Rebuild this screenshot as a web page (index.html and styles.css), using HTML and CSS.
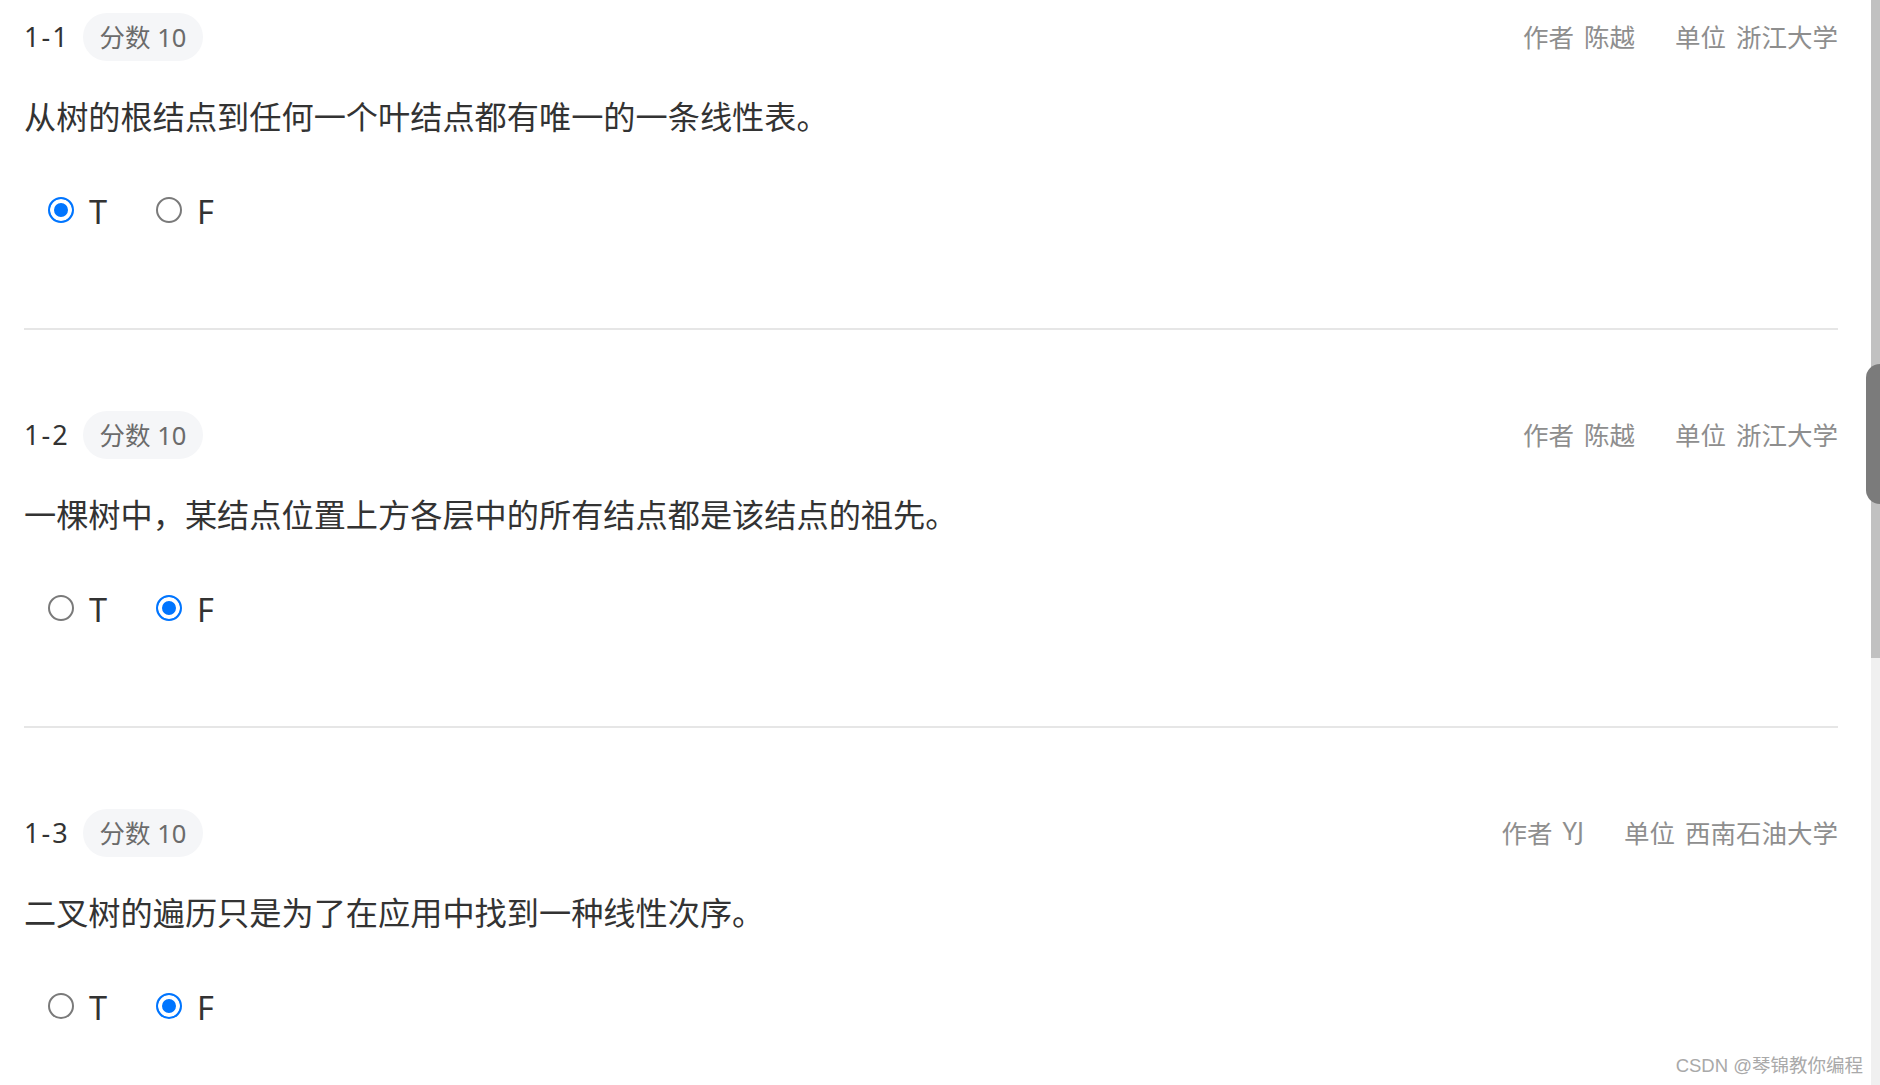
FILE: index.html
```html
<!DOCTYPE html>
<html lang="zh-CN">
<head>
<meta charset="utf-8">
<title>判断题</title>
<link rel="stylesheet" href="styles.css">
</head>
<body>
<div class="page">
  <main class="main">
    <section class="problem">
      <div class="head">
        <div class="head-left">
          <span class="num">1-1</span>
          <span class="score">分数 10</span>
        </div>
        <div class="meta">
          <span class="meta-item"><span>作者</span><span>陈越</span></span>
          <span class="meta-item"><span>单位</span><span>浙江大学</span></span>
        </div>
      </div>
      <p class="question">从树的根结点到任何一个叶结点都有唯一的一条线性表。</p>
      <div class="options">
        <label class="option"><input type="radio" name="q1" checked><span class="opt-text">T</span></label>
        <label class="option"><input type="radio" name="q1"><span class="opt-text">F</span></label>
      </div>
    </section>
    <section class="problem">
      <div class="head">
        <div class="head-left">
          <span class="num">1-2</span>
          <span class="score">分数 10</span>
        </div>
        <div class="meta">
          <span class="meta-item"><span>作者</span><span>陈越</span></span>
          <span class="meta-item"><span>单位</span><span>浙江大学</span></span>
        </div>
      </div>
      <p class="question">一棵树中，某结点位置上方各层中的所有结点都是该结点的祖先。</p>
      <div class="options">
        <label class="option"><input type="radio" name="q2"><span class="opt-text">T</span></label>
        <label class="option"><input type="radio" name="q2" checked><span class="opt-text">F</span></label>
      </div>
    </section>
    <section class="problem">
      <div class="head">
        <div class="head-left">
          <span class="num">1-3</span>
          <span class="score">分数 10</span>
        </div>
        <div class="meta">
          <span class="meta-item"><span>作者</span><span>YJ</span></span>
          <span class="meta-item"><span>单位</span><span>西南石油大学</span></span>
        </div>
      </div>
      <p class="question">二叉树的遍历只是为了在应用中找到一种线性次序。</p>
      <div class="options">
        <label class="option"><input type="radio" name="q3"><span class="opt-text">T</span></label>
        <label class="option"><input type="radio" name="q3" checked><span class="opt-text">F</span></label>
      </div>
    </section>
  </main>
  <div class="scrollbar">
    <div class="scroll-thumb"></div>
    <div class="scroll-track"></div>
  </div>
  <div class="side-handle"></div>
  <div class="watermark">CSDN @琴锦教你编程</div>
</div>
</body>
</html>
```

FILE: styles.css
```css
html, body {
  margin: 0;
  padding: 0;
  background: #ffffff;
}

body {
  font-family: "Noto Sans", "Noto Sans CJK SC", sans-serif;
  color: #333333;
}

.page {
  position: relative;
  display: flex;
  height: 1085px;
  overflow: hidden;
}

.main {
  flex: 1;
  padding: 0 33px 0 24px;
}

.problem {
  padding: 81px 0 94px;
  border-bottom: 2px solid #e6e6e6;
}

.problem:first-child {
  padding-top: 13px;
}

.head {
  display: flex;
  justify-content: space-between;
  align-items: center;
  height: 48px;
}

.head-left {
  display: flex;
  align-items: center;
  gap: 13px;
}

.num {
  font-size: 27px;
  letter-spacing: 2px;
  color: #333333;
  margin-bottom: 2px;
}

.score {
  display: inline-flex;
  align-items: center;
  box-sizing: border-box;
  height: 48px;
  padding: 0 17px 4px;
  border-radius: 24px;
  background: #f5f6f8;
  color: #6b6b6b;
  font-size: 25.5px;
}

.meta {
  display: flex;
  align-items: center;
  gap: 40px;
  font-size: 25.5px;
  color: #8e8e8e;
  margin-bottom: 4px;
}

.meta-item {
  display: flex;
  gap: 10px;
}

.question {
  margin: 32px 0 0;
  font-size: 32.2px;
  line-height: 47px;
  color: #333333;
}

.options {
  display: flex;
  align-items: center;
  gap: 49px;
  height: 48px;
  margin-top: 46px;
  padding-left: 24px;
}

.option {
  display: flex;
  align-items: center;
  gap: 15px;
}

.option input {
  appearance: none;
  -webkit-appearance: none;
  margin: 0;
  width: 26px;
  height: 26px;
  box-sizing: border-box;
  border: 2px solid #7a7a7a;
  border-radius: 50%;
  background: #ffffff;
}

.option input:checked {
  border-color: #0075ff;
  background: #0075ff;
  box-shadow: inset 0 0 0 4px #ffffff;
}

.opt-text {
  font-size: 32.5px;
  line-height: 48px;
  color: #333333;
  position: relative;
  top: 2px;
}

.scrollbar {
  width: 9px;
  display: flex;
  flex-direction: column;
}

.scroll-thumb {
  height: 658px;
  background: #c1c1c1;
}

.scroll-track {
  flex: 1;
  background: #f0f0f0;
}

.side-handle {
  position: absolute;
  right: 0;
  top: 364px;
  width: 14px;
  height: 140px;
  border-radius: 14px 0 0 14px;
  background: #7b7b7b;
}

.watermark {
  position: absolute;
  right: 17px;
  bottom: 8px;
  font-family: "Liberation Sans", "Noto Sans CJK SC", sans-serif;
  font-size: 18.5px;
  color: #a9a9a9;
  text-shadow: 0 0 1px #ffffff, 0 0 1px #ffffff;
}
```
